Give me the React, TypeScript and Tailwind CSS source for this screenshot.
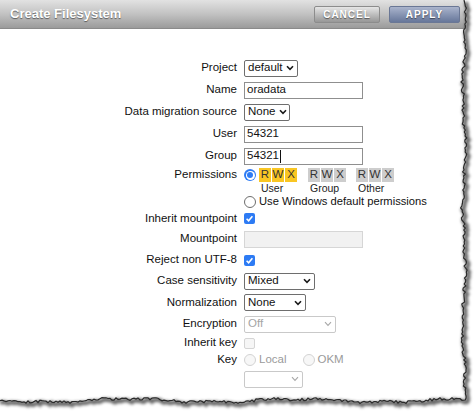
import React from 'react';

const FONT = { fontFamily: '"Liberation Sans", Arial, Helvetica, sans-serif' };

function mulberry32(a: number) {
  return function () {
    a |= 0;
    a = (a + 0x6d2b79f5) | 0;
    let t = Math.imul(a ^ (a >>> 15), 1 | a);
    t = (t + Math.imul(t ^ (t >>> 7), 61 | t)) ^ t;
    return ((t ^ (t >>> 14)) >>> 0) / 4294967296;
  };
}

function buildEdge() {
  const rand = mulberry32(11);
  const pts: [number, number][] = [];
  for (let y = 0; y <= 400; y += 2) {
    const x = 464 + (rand() - 0.5) * 3 + 1.4 * Math.sin(y / 19) + 0.8 * Math.sin(y / 7);
    pts.push([x, y]);
  }
  for (let x = 462; x >= -2; x -= 2) {
    const y = 400.5 + (rand() - 0.5) * 2.8 + 1.6 * Math.sin(x / 27) + 0.7 * Math.sin(x / 9);
    pts.push([x, y]);
  }
  return pts;
}

const EDGE = buildEdge();

function TornEdge() {
  const line = EDGE.map((p, i) => `${i ? 'L' : 'M'}${p[0].toFixed(1)} ${p[1].toFixed(1)}`).join(' ');
  const last = EDGE[EDGE.length - 1];
  const outside = `M474 -1 L${EDGE[0][0].toFixed(1)} -1 ${line.replace(/^M/, 'L')} L-1 ${last[1].toFixed(1)} L-1 413 L474 413 Z`;
  return (
    <svg className="absolute inset-0 pointer-events-none" width="474" height="412" viewBox="0 0 474 412">
      <defs>
        <filter id="tornBlur" x="-10%" y="-10%" width="120%" height="120%">
          <feGaussianBlur stdDeviation="1.5" />
        </filter>
      </defs>
      <path d={outside} fill="#ffffff" />
      <path d={line} fill="none" stroke="rgba(0,0,0,0.6)" strokeWidth="4" filter="url(#tornBlur)" transform="translate(2 2)" />
      <path d={line} fill="none" stroke="#2a2a2a" strokeWidth="1.2" />
    </svg>
  );
}

function Chevron({ disabled }: { disabled?: boolean }) {
  return (
    <svg width="8" height="6" viewBox="0 0 8 6" className="shrink-0">
      <path d="M1 1.2 L4 4.4 L7 1.2" fill="none" stroke={disabled ? '#a8a8a8' : '#1a1a1a'} strokeWidth={disabled ? 1.1 : 1.6} />
    </svg>
  );
}

function Select({ w, text, disabled }: { w: string; text: string; disabled?: boolean }) {
  return (
    <div
      className={`${w} h-[17px] flex items-center justify-between gap-[3px] pl-[3px] pr-[3px] border rounded-[2px] ${
        disabled ? 'border-[#c9c9c9] text-[#a5a5a5] bg-white' : 'border-[#6e6e6e] text-[#111] bg-white'
      }`}
    >
      <span className="leading-none whitespace-nowrap">{text}</span>
      <Chevron disabled={disabled} />
    </div>
  );
}

function Input({ value, disabled, caret }: { value?: string; disabled?: boolean; caret?: boolean }) {
  return (
    <div
      className={`w-[119px] h-[17px] flex items-center pl-[2px] border ${
        disabled ? 'border-[#d6d6d6] bg-[#f1f1f1]' : 'border-[#8f8f8f] bg-white'
      }`}
    >
      <span className="leading-none text-[#111]">{value}</span>
      {caret && <span className="w-[1px] h-[13px] bg-[#111] ml-[1px]" />}
    </div>
  );
}

function Checkbox({ checked, disabled }: { checked?: boolean; disabled?: boolean }) {
  if (checked) {
    return (
      <div className="w-[11px] h-[11px] rounded-[2px] bg-[#2d7bf4] flex items-center justify-center">
        <svg width="9" height="9" viewBox="0 0 9 9">
          <path d="M1.6 4.8 L3.6 6.8 L7.4 2.2" fill="none" stroke="#fff" strokeWidth="1.6" />
        </svg>
      </div>
    );
  }
  return (
    <div
      className={`w-[11px] h-[11px] rounded-[2px] border ${
        disabled ? 'border-[#d5d5d5] bg-[#f6f6f6]' : 'border-[#8a8a8a] bg-white'
      }`}
    />
  );
}

function Radio({ checked, disabled }: { checked?: boolean; disabled?: boolean }) {
  if (checked) {
    return (
      <div className="w-[12px] h-[12px] rounded-full bg-[#2d7bf4] flex items-center justify-center">
        <div className="w-[9px] h-[9px] rounded-full bg-white flex items-center justify-center">
          <div className="w-[6px] h-[6px] rounded-full bg-[#2d7bf4]" />
        </div>
      </div>
    );
  }
  return (
    <div
      className={`w-[12px] h-[12px] rounded-full border ${
        disabled ? 'border-[#d3d3d3] bg-[#f7f7f7]' : 'border-[#6d6d6d] bg-white'
      }`}
    />
  );
}

function Row({ label, h, children }: { label: string; h: string; children?: React.ReactNode }) {
  return (
    <div className={`flex items-center ${h}`}>
      <div className="w-[237px] text-right text-[#111] leading-none">{label}</div>
      <div className="ml-[7px] flex items-center">{children}</div>
    </div>
  );
}

function PermGroup({ label, on, ml }: { label: string; on?: boolean; ml: string }) {
  return (
    <div className={`flex flex-col ${ml}`}>
      <div className="h-[16px] flex items-center gap-[1px]">
        {['R', 'W', 'X'].map((l) => (
          <div
            key={l}
            className={`w-[12px] h-[14px] flex items-center justify-center text-[11.5px] leading-none text-[#333] ${
              on ? 'bg-[#f9c623]' : 'bg-[#cdcdcd]'
            }`}
          >
            {l}
          </div>
        ))}
      </div>
      <div className="h-[11px] text-[10.5px] leading-[11px] text-[#222] pl-[2px]">{label}</div>
    </div>
  );
}

function Header() {
  return (
    <div className="h-[29px] w-[467px] flex items-center justify-between bg-linear-to-b from-[#e2e2e2] via-[#c2c2c2] to-[#9b9b9b] border-b border-[#8a8a8a]">
      <div className="pl-[10px] text-[13px] font-bold text-white [text-shadow:0_1px_1px_rgba(0,0,0,0.5)]">
        Create Filesystem
      </div>
      <div className="flex items-center gap-[9px] pr-[7px]">
        <div className="w-[66px] h-[17px] rounded-[2px] flex items-center justify-center text-[10px] font-bold tracking-[1px] text-white bg-linear-to-b from-[#e6e6e6] to-[#979797] border border-[#8c8c8c] [text-shadow:0_1px_1px_rgba(0,0,0,0.5)]">
          CANCEL
        </div>
        <div className="w-[71px] h-[17px] rounded-[2px] flex items-center justify-center text-[10px] font-bold tracking-[1px] text-white bg-linear-to-b from-[#aab4cc] to-[#67779a] border border-[#6a7795] [text-shadow:0_1px_1px_rgba(0,0,0,0.5)]">
          APPLY
        </div>
      </div>
    </div>
  );
}

export default function App() {
  return (
    <div className="relative w-[474px] h-[412px] bg-white overflow-hidden text-[11.5px]" style={FONT}>
      <Header />
      <div className="pt-[28px]">
        <Row label="Project" h="h-[22px]">
          <Select w="w-[54px]" text="default" />
        </Row>
        <Row label="Name" h="h-[22px]">
          <Input value="oradata" />
        </Row>
        <Row label="Data migration source" h="h-[22px]">
          <Select w="w-[46px]" text="None" />
        </Row>
        <Row label="User" h="h-[22px]">
          <Input value="54321" />
        </Row>
        <Row label="Group" h="h-[22px]">
          <Input value="54321" caret />
        </Row>

        <div className="flex">
          <div className="w-[237px] h-[16px] flex items-center justify-end text-[#111] leading-none">Permissions</div>
          <div className="ml-[7px] flex flex-col">
            <div className="flex">
              <div className="h-[16px] flex items-center">
                <Radio checked />
              </div>
              <PermGroup label="User" on ml="ml-[3px]" />
              <PermGroup label="Group" ml="ml-[11px]" />
              <PermGroup label="Other" ml="ml-[10px]" />
            </div>
            <div className="h-[15px] flex items-center">
              <Radio />
              <span className="ml-[3px] text-[11.2px] leading-none text-[#111]">Use Windows default permissions</span>
            </div>
          </div>
        </div>

        <Row label="Inherit mountpoint" h="h-[19px]">
          <Checkbox checked />
        </Row>
        <Row label="Mountpoint" h="h-[22px]">
          <Input disabled />
        </Row>
        <Row label="Reject non UTF-8" h="h-[20px]">
          <Checkbox checked />
        </Row>
        <Row label="Case sensitivity" h="h-[22px]">
          <Select w="w-[71px]" text="Mixed" />
        </Row>
        <Row label="Normalization" h="h-[21px]">
          <Select w="w-[62px]" text="None" />
        </Row>
        <Row label="Encryption" h="h-[22px]">
          <Select w="w-[92px]" text="Off" disabled />
        </Row>
        <Row label="Inherit key" h="h-[16px]">
          <Checkbox disabled />
        </Row>
        <Row label="Key" h="h-[18px]">
          <Radio disabled />
          <span className="ml-[3px] text-[#9a9a9a] leading-none">Local</span>
          <span className="ml-[16px]">
            <Radio disabled />
          </span>
          <span className="ml-[3px] text-[#9a9a9a] leading-none">OKM</span>
        </Row>
        <Row label="" h="h-[20px]">
          <Select w="w-[59px]" text="" disabled />
        </Row>
      </div>
      <TornEdge />
    </div>
  );
}
